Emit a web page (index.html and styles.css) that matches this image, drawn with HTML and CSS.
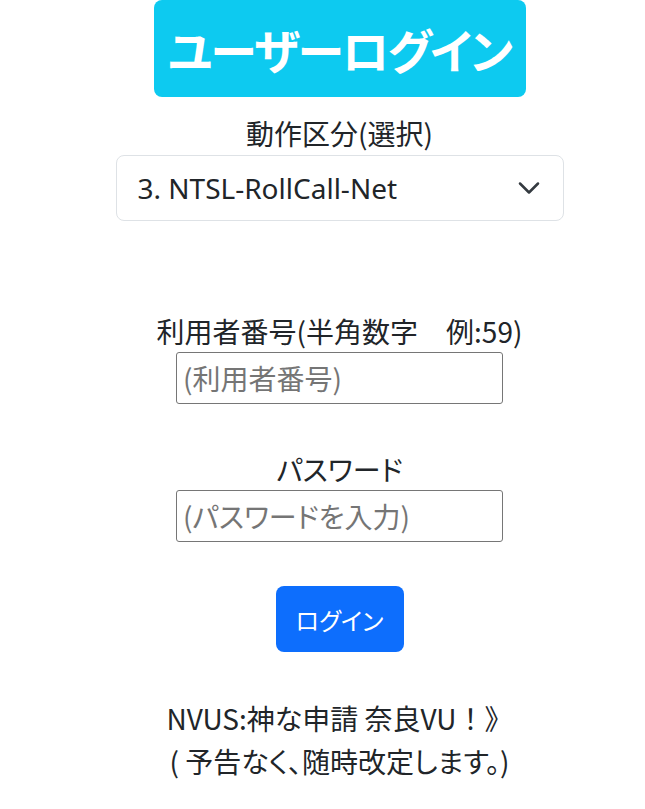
FILE: index.html
```html
<!DOCTYPE html>
<html lang="ja">
<head>
<meta charset="utf-8">
<title>ユーザーログイン</title>
<link rel="stylesheet" href="styles.css">
</head>
<body>
<main class="page">
  <h1 class="title">ユーザーログイン</h1>
  <label class="label label-mode" for="mode">動作区分(選択)</label>
  <div class="select-wrap">
    <select id="mode" class="select">
      <option>3. NTSL-RollCall-Net</option>
    </select>
    <svg class="chevron" viewBox="0 0 16 16" width="24" height="24" aria-hidden="true">
      <path d="m2 5 6 6 6-6" fill="none" stroke="#343a40" stroke-width="1.7" stroke-linecap="round" stroke-linejoin="round"/>
    </svg>
  </div>
  <label class="label label-user" for="user">利用者番号(半角数字　例:59)</label>
  <input id="user" class="input" type="text" placeholder="(利用者番号)">
  <label class="label label-pass" for="pass">パスワード</label>
  <input id="pass" class="input" type="password" placeholder="(パスワードを入力)">
  <button class="btn" type="button">ログイン</button>
  <p class="note">NVUS:神な申請 奈良VU<span class="wide">！》</span><br>( 予告なく、随時改定します。)</p>
</main>
</body>
</html>
```
FILE: styles.css
```css
html, body {
  margin: 0;
  padding: 0;
  background: #ffffff;
}
body {
  font-family: "Noto Sans CJK JP", "Noto Sans", sans-serif;
  font-feature-settings: "palt";
  color: #212529;
  font-size: 28px;
  line-height: 1.5;
}
.page {
  display: flex;
  flex-direction: column;
  align-items: center;
  padding-left: 34px;
}
.title {
  margin: 0;
  background: #0dcaf0;
  color: #ffffff;
  font-size: 47px;
  font-weight: 700;
  line-height: 97px;
  height: 97px;
  width: 372px;
  box-sizing: border-box;
  text-align: center;
  border-radius: 8px;
  letter-spacing: -2px;
  white-space: nowrap;
}
.label {
  display: block;
  text-align: center;
  font-size: 28px;
  line-height: 42px;
  white-space: nowrap;
}
.label-mode { margin-top: 15px; }
.label-user { margin-top: 89px; }
.label-pass { margin-top: 44px; }
.select-wrap {
  position: relative;
  width: 448px;
  margin-top: 1px;
}
.select {
  appearance: none;
  -webkit-appearance: none;
  display: block;
  width: 100%;
  height: 66px;
  box-sizing: border-box;
  border: 1px solid #dee2e6;
  border-radius: 8px;
  background: #ffffff;
  padding: 0 60px 0 21px;
  font-family: "Noto Sans", "Noto Sans CJK JP", sans-serif;
  font-size: 28px;
  color: #212529;
}
.chevron {
  position: absolute;
  right: 23px;
  top: 21px;
  pointer-events: none;
}
.input {
  display: block;
  width: 327px;
  height: 52px;
  box-sizing: border-box;
  border: 1px solid #767676;
  border-radius: 3px;
  padding: 0 6px;
  font-family: "Noto Sans CJK JP", sans-serif;
  font-feature-settings: "palt";
  font-size: 28px;
  color: #212529;
  background: #ffffff;
}
.input::placeholder {
  color: #757575;
}
.btn {
  margin-top: 44px;
  width: 128px;
  height: 66px;
  border: none;
  border-radius: 8px;
  background: #0d6efd;
  color: #ffffff;
  font-family: "Noto Sans CJK JP", sans-serif;
  font-feature-settings: "palt";
  font-size: 24px;
  padding: 0;
}
.note {
  margin: 45px 0 0;
  text-align: center;
  font-size: 28px;
  line-height: 43px;
  white-space: nowrap;
}
.wide {
  font-feature-settings: normal;
}
```
